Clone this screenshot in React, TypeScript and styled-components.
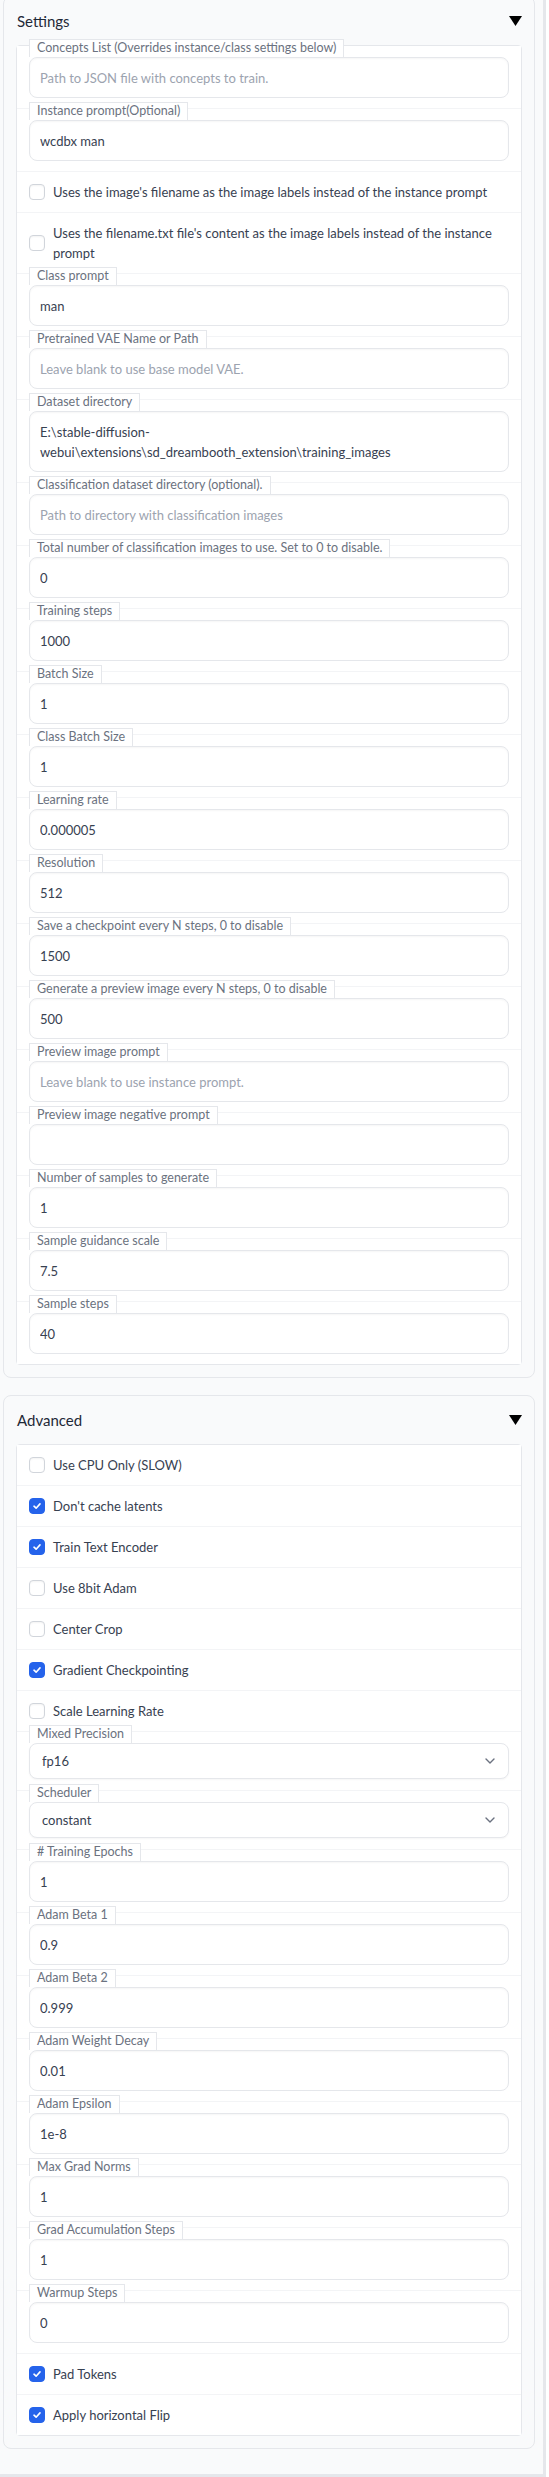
import React from 'react'
import styled, { createGlobalStyle } from 'styled-components'

const GlobalStyle = createGlobalStyle`
  * { box-sizing: border-box; }
  body {
    margin: 0;
    background: #ffffff;
    font-family: Lato, "Liberation Sans", sans-serif;
  }
`

const Page = styled.div`
  width: 546px;
  margin-top: -4px;
  padding: 0 8px 25px 3px;
  background: #f9fafb;
  border-right: 3px solid #e5e7eb;
  border-bottom: 3px solid #e5e7eb;
  display: flex;
  flex-direction: column;
  gap: 17px;
`

const Panel = styled.section`
  width: 532px;
  padding: 0 12px 12px;
  background: #f9fafb;
  border: 1px solid #e5e7eb;
  border-radius: 8px;
`

const PanelHeader = styled.div`
  height: 48px;
  display: flex;
  align-items: center;
  justify-content: space-between;
  padding-left: 1px;
  font-size: 15px;
  color: #1f2937;
`

const Form = styled.div`
  display: flex;
  flex-direction: column;
  gap: 1px;
  background: #f3f4f6;
  border: 1px solid #e5e7eb;
  border-radius: 4px;
`

const Field = styled.div<{ $bottom?: number }>`
  background: #ffffff;
  padding: 0 12px ${p => p.$bottom ?? 10}px;
  display: flex;
  flex-direction: column;
  align-items: flex-start;
`

const Tab = styled.span`
  position: relative;
  z-index: 1;
  margin-top: -7px;
  height: 18px;
  line-height: 16px;
  padding: 0 7px;
  background: #ffffff;
  border: 1px solid #e5e7eb;
  border-bottom: none;
  font-size: 12.5px;
  color: #6b7280;
  white-space: nowrap;
`

const TextInput = styled.input`
  width: 100%;
  height: 41px;
  padding: 0 10px;
  background: #ffffff;
  border: 1px solid #e5e7eb;
  border-radius: 8px;
  box-shadow: inset 0 1px 2px rgba(0, 0, 0, 0.04);
  font-family: inherit;
  font-size: 13px;
  color: #374151;
  outline: none;

  &::placeholder {
    color: #9ca3af;
  }
`

const TextArea = styled.textarea`
  width: 100%;
  height: 61px;
  padding: 10px 10px;
  background: #ffffff;
  border: 1px solid #e5e7eb;
  border-radius: 8px;
  box-shadow: inset 0 1px 2px rgba(0, 0, 0, 0.04);
  font-family: inherit;
  font-size: 13px;
  line-height: 20px;
  color: #374151;
  resize: none;
  overflow: hidden;
  outline: none;
`

const SelectWrap = styled.div`
  position: relative;
  width: 100%;
`

const Select = styled.select`
  appearance: none;
  width: 100%;
  height: 36px;
  padding: 0 12px;
  background: #ffffff;
  border: 1px solid #e5e7eb;
  border-radius: 8px;
  box-shadow: 0 1px 2px rgba(0, 0, 0, 0.04);
  font-family: inherit;
  font-size: 13px;
  color: #374151;
  outline: none;
`

const Chevron = styled.svg`
  position: absolute;
  right: 14px;
  top: 50%;
  margin-top: -3px;
  pointer-events: none;
`

const CheckRow = styled.label`
  background: #ffffff;
  min-height: 40px;
  padding: 10px 12px;
  display: flex;
  align-items: center;
  gap: 8px;
  font-size: 13px;
  line-height: 20px;
  color: #374151;
`

const Box = styled.span<{ $checked: boolean }>`
  flex: none;
  width: 16px;
  height: 16px;
  border-radius: 4px;
  border: 1px solid ${p => (p.$checked ? '#2563eb' : '#d1d5db')};
  background: ${p => (p.$checked ? '#2563eb' : '#ffffff')};
  box-shadow: ${p => (p.$checked ? 'none' : 'inset 0 1px 2px rgba(0,0,0,0.05)')};
  display: flex;
  align-items: center;
  justify-content: center;
`

type Item =
  | { kind: 'text'; label: string; value?: string; placeholder?: string }
  | { kind: 'area'; label: string; value: string }
  | { kind: 'check'; label: string; checked: boolean }
  | { kind: 'select'; label: string; value: string }

const settings: Item[] = [
  { kind: 'text', label: 'Concepts List (Overrides instance/class settings below)', placeholder: 'Path to JSON file with concepts to train.' },
  { kind: 'text', label: 'Instance prompt(Optional)', value: 'wcdbx man' },
  { kind: 'check', label: "Uses the image's filename as the image labels instead of the instance prompt", checked: false },
  { kind: 'check', label: "Uses the filename.txt file's content as the image labels instead of the instance prompt", checked: false },
  { kind: 'text', label: 'Class prompt', value: 'man' },
  { kind: 'text', label: 'Pretrained VAE Name or Path', placeholder: 'Leave blank to use base model VAE.' },
  { kind: 'area', label: 'Dataset directory', value: 'E:\\stable-diffusion-webui\\extensions\\sd_dreambooth_extension\\training_images' },
  { kind: 'text', label: 'Classification dataset directory (optional).', placeholder: 'Path to directory with classification images' },
  { kind: 'text', label: 'Total number of classification images to use. Set to 0 to disable.', value: '0' },
  { kind: 'text', label: 'Training steps', value: '1000' },
  { kind: 'text', label: 'Batch Size', value: '1' },
  { kind: 'text', label: 'Class Batch Size', value: '1' },
  { kind: 'text', label: 'Learning rate', value: '0.000005' },
  { kind: 'text', label: 'Resolution', value: '512' },
  { kind: 'text', label: 'Save a checkpoint every N steps, 0 to disable', value: '1500' },
  { kind: 'text', label: 'Generate a preview image every N steps, 0 to disable', value: '500' },
  { kind: 'text', label: 'Preview image prompt', placeholder: 'Leave blank to use instance prompt.' },
  { kind: 'text', label: 'Preview image negative prompt', value: '' },
  { kind: 'text', label: 'Number of samples to generate', value: '1' },
  { kind: 'text', label: 'Sample guidance scale', value: '7.5' },
  { kind: 'text', label: 'Sample steps', value: '40' },
]

const advanced: Item[] = [
  { kind: 'check', label: 'Use CPU Only (SLOW)', checked: false },
  { kind: 'check', label: "Don't cache latents", checked: true },
  { kind: 'check', label: 'Train Text Encoder', checked: true },
  { kind: 'check', label: 'Use 8bit Adam', checked: false },
  { kind: 'check', label: 'Center Crop', checked: false },
  { kind: 'check', label: 'Gradient Checkpointing', checked: true },
  { kind: 'check', label: 'Scale Learning Rate', checked: false },
  { kind: 'select', label: 'Mixed Precision', value: 'fp16' },
  { kind: 'select', label: 'Scheduler', value: 'constant' },
  { kind: 'text', label: '# Training Epochs', value: '1' },
  { kind: 'text', label: 'Adam Beta 1', value: '0.9' },
  { kind: 'text', label: 'Adam Beta 2', value: '0.999' },
  { kind: 'text', label: 'Adam Weight Decay', value: '0.01' },
  { kind: 'text', label: 'Adam Epsilon', value: '1e-8' },
  { kind: 'text', label: 'Max Grad Norms', value: '1' },
  { kind: 'text', label: 'Grad Accumulation Steps', value: '1' },
  { kind: 'text', label: 'Warmup Steps', value: '0' },
  { kind: 'check', label: 'Pad Tokens', checked: true },
  { kind: 'check', label: 'Apply horizontal Flip', checked: true },
]

const Triangle = () => (
  <svg width="13" height="10" viewBox="0 0 13 10">
    <polygon points="0,0 13,0 6.5,10" fill="#000" />
  </svg>
)

const CheckMark = () => (
  <svg width="10" height="10" viewBox="0 0 10 10">
    <path d="M2 5.2 L4.1 7.2 L8 2.9" fill="none" stroke="#fff" strokeWidth="1.6" strokeLinecap="round" strokeLinejoin="round" />
  </svg>
)

const Row = ({ item }: { item: Item }) => {
  if (item.kind === 'check') {
    return (
      <CheckRow>
        <Box $checked={ item.checked }>{ item.checked && <CheckMark/> }</Box>
        <span>{ item.label }</span>
      </CheckRow>
    )
  }
  if (item.kind === 'select') {
    return (
      <Field $bottom={ 11 }>
        <Tab>{ item.label }</Tab>
        <SelectWrap>
          <Select defaultValue={ item.value }>
            <option>{ item.value }</option>
          </Select>
          <Chevron width="10" height="6" viewBox="0 0 10 6">
            <path d="M1 1 L5 5 L9 1" fill="none" stroke="#6b7280" strokeWidth="1.4" strokeLinecap="round" strokeLinejoin="round" />
          </Chevron>
        </SelectWrap>
      </Field>
    )
  }
  if (item.kind === 'area') {
    return (
      <Field>
        <Tab>{ item.label }</Tab>
        <TextArea rows={ 2 } readOnly defaultValue={ item.value }/>
      </Field>
    )
  }
  return (
    <Field>
      <Tab>{ item.label }</Tab>
      <TextInput readOnly defaultValue={ item.value } placeholder={ item.placeholder }/>
    </Field>
  )
}

const Accordion = ({ title, items }: { title: string, items: Item[] }) => (
  <Panel>
    <PanelHeader>
      <span>{ title }</span>
      <Triangle/>
    </PanelHeader>
    <Form>
      { items.map(item => <Row key={ item.label } item={ item }/>) }
    </Form>
  </Panel>
)

const App = () => (
  <>
    <GlobalStyle/>
    <Page>
      <Accordion title="Settings" items={ settings }/>
      <Accordion title="Advanced" items={ advanced }/>
    </Page>
  </>
)

export default App
